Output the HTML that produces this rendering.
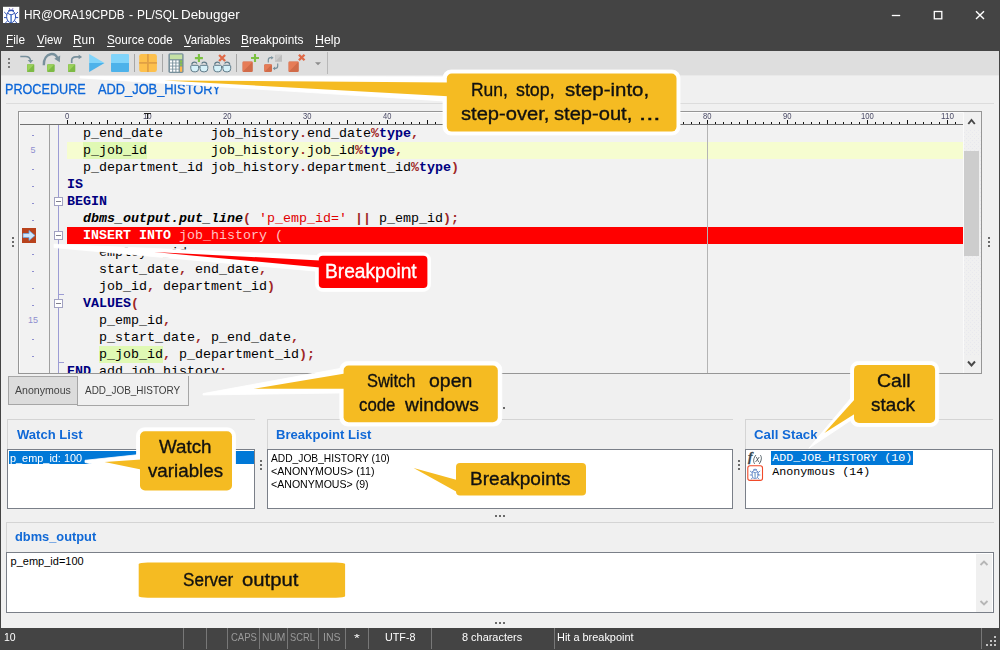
<!DOCTYPE html>
<html><head><meta charset="utf-8"><title>PL/SQL Debugger</title>
<style>
*{box-sizing:border-box;margin:0;padding:0}
html,body{width:1000px;height:650px;overflow:hidden;background:#f0f0f0;font-family:"Liberation Sans",sans-serif}
#win{position:absolute;left:0;top:0;width:1000px;height:650px;background:#f0f0f0;overflow:hidden}
.a{position:absolute}
.tx{position:absolute;white-space:pre;display:block}
.tx u{text-decoration:underline;text-decoration-thickness:1px;text-underline-offset:1.5px}
svg{position:absolute;overflow:visible}

</style></head><body>
<div id="win">
<div class="a" style="left:0px;top:0px;width:1000px;height:51px;background:#444444;"></div><svg style="left:3px;top:7px" width="16" height="16" viewBox="0 0 16 16"><rect width="16.300" height="16.200" y="-.2" fill="#fff"/><g fill="none" stroke="#2f52b4" stroke-width="1" stroke-linecap="round"><ellipse cx="8.100" cy="9.600" rx="4.500" ry="6.100"/><path d="M4.600 6Q8.100 9.800 11.600 6"/><path d="M5.900 3.700Q8.100 2.700 10.300 3.700" stroke-width="1.400"/><path d="M8.100 7.800V15.600" stroke="#4a78c8" stroke-width="1.500" stroke-linecap="butt"/><path d="M6.400 1.500 6.600 2.500M9.800 1.500 9.600 2.500" stroke="#8a7fd0"/><path d="M3.700 7.400 1.500 5.300M12.500 7.400 14.700 5.300M3.400 10.600H1.400M12.800 10.600h2M4.700 13.700 2.400 16M11.500 13.700 13.800 16"/></g></svg><span id="t0" class="tx" style="left:23.58px;top:8.33px;font-size:13.20px;line-height:13.20px;color:#fff;transform:scaleX(0.8950);transform-origin:0 0;">HR@ORA19CPDB</span><span id="t1" class="tx" style="left:128.91px;top:8.33px;font-size:13.20px;line-height:13.20px;color:#fff;transform:scaleX(0.9412);transform-origin:0 0;">-</span><span id="t2" class="tx" style="left:136.57px;top:8.33px;font-size:13.20px;line-height:13.20px;color:#fff;transform:scaleX(0.9027);transform-origin:0 0;">PL/SQL</span><span id="t3" class="tx" style="left:181.45px;top:8.33px;font-size:13.20px;line-height:13.20px;color:#fff;transform:scaleX(1.0144);transform-origin:0 0;">Debugger</span><svg style="left:880px;top:0" width="120" height="30" viewBox="0 0 120 30"><g stroke="#fff" stroke-width="1.300" fill="none"><path d="M11.800 15.500h8.400"/><rect x="54.300" y="11.500" width="7.500" height="7.300"/><path d="M96 11.300l8 7.800M104 11.300l-8 7.800" stroke-width="1.400"/></g></svg><span id="t4" class="tx" style="left:6.44px;top:33.99px;font-size:12.30px;line-height:12.30px;color:#fff;transform:scaleX(0.9629);transform-origin:0 0;"><u>F</u>ile</span><span id="t5" class="tx" style="left:37.15px;top:33.99px;font-size:12.30px;line-height:12.30px;color:#fff;transform:scaleX(0.9374);transform-origin:0 0;"><u>V</u>iew</span><span id="t6" class="tx" style="left:73.44px;top:33.99px;font-size:12.30px;line-height:12.30px;color:#fff;transform:scaleX(0.9628);transform-origin:0 0;"><u>R</u>un</span><span id="t7" class="tx" style="left:106.68px;top:33.99px;font-size:12.30px;line-height:12.30px;color:#fff;transform:scaleX(0.9534);transform-origin:0 0;"><u>S</u>ource code</span><span id="t8" class="tx" style="left:183.95px;top:33.99px;font-size:12.30px;line-height:12.30px;color:#fff;transform:scaleX(0.9216);transform-origin:0 0;"><u>V</u>ariables</span><span id="t9" class="tx" style="left:241.44px;top:33.99px;font-size:12.30px;line-height:12.30px;color:#fff;transform:scaleX(0.9630);transform-origin:0 0;"><u>B</u>reakpoints</span><span id="t10" class="tx" style="left:315.39px;top:33.99px;font-size:12.30px;line-height:12.30px;color:#fff;transform:scaleX(1.0081);transform-origin:0 0;"><u>H</u>elp</span><div class="a" style="left:1px;top:51px;width:998px;height:24px;background:#dedede;"></div><div class="a" style="left:1px;top:75px;width:998px;height:1px;background:#e9e9e9;"></div><svg style="left:0;top:0" width="340" height="80" viewBox="0 0 340 80"><rect x="8" y="58" width="2" height="2" fill="#7a7a7a"/><rect x="8" y="62" width="2" height="2" fill="#7a7a7a"/><rect x="8" y="66" width="2" height="2" fill="#7a7a7a"/><path d="M20.300 56.400H25.500Q30.300 56.400 30.600 61" fill="none" stroke="#78909c" stroke-width="1.500"/><polygon points="27.7,60 33.300,60 30.600,63.300" fill="#78909c"/><rect x="27.0" y="64.2" width="7.3" height="7.7" rx="0.6" fill="#7dba45"/><polygon points="27.3,64.5 34.0,64.5 27.3,71.6" fill="#9bd05a"/><path d="M43.800 65.200C43.500 51.500 57.300 51.500 57.500 59.500" fill="none" stroke="#78909c" stroke-width="2.400"/><polygon points="54.300,58.800 60.200,55.600 59.800,62.300" fill="#78909c"/><rect x="47.0" y="64.2" width="7.7" height="7.7" rx="1.2" fill="#7dba45"/><polygon points="47.3,64.5 54.4,64.5 47.3,71.6" fill="#9bd05a"/><path d="M71.700 63V60.500Q71.700 57 76 56.900H79.500" fill="none" stroke="#78909c" stroke-width="1.700"/><polygon points="78.600,54.400 82.100,56.900 78.600,59.300" fill="#78909c"/><rect x="68.0" y="64.2" width="7.3" height="7.7" rx="0.6" fill="#7dba45"/><polygon points="68.3,64.5 75.0,64.5 68.3,71.6" fill="#9bd05a"/><polygon points="89.200,54.100 104.500,63 89.200,63" fill="#81d4fa"/><polygon points="89.200,63 104.500,63 89.200,72.100" fill="#4db2ea"/><path d="M111 55.100a1 1 0 0 1 1-1h16a1 1 0 0 1 1 1V63H111z" fill="#81d4fa"/><path d="M111 63h18v8a1 1 0 0 1-1 1h-16a1 1 0 0 1-1-1z" fill="#4db2ea"/><rect x="134" y="54" width="1" height="18" fill="#a6a6a6"/><rect x="162" y="54" width="1" height="18" fill="#a6a6a6"/><rect x="236" y="54" width="1" height="18" fill="#a6a6a6"/><rect x="139.200" y="54.100" width="17.700" height="17.900" rx="2.200" fill="#fdc04c"/><rect x="147" y="54.100" width="1.800" height="17.900" fill="#e0a045"/><rect x="139.200" y="62" width="17.700" height="1.800" fill="#e0a045"/><rect x="168.400" y="53.200" width="15.200" height="19.700" rx="1.600" fill="#78909c"/><rect x="169.900" y="54.500" width="12.300" height="4.700" fill="#c5e1a5"/><rect x="170.0" y="60.4" width="2.200" height="2.200" fill="#fff"/><rect x="173.2" y="60.4" width="2.200" height="2.200" fill="#fff"/><rect x="176.4" y="60.4" width="2.200" height="2.200" fill="#fff"/><rect x="170.0" y="63.4" width="2.200" height="2.200" fill="#fff"/><rect x="173.2" y="63.4" width="2.200" height="2.200" fill="#fff"/><rect x="176.4" y="63.4" width="2.200" height="2.200" fill="#fff"/><rect x="170.0" y="66.5" width="2.200" height="2.200" fill="#fff"/><rect x="173.2" y="66.5" width="2.200" height="2.200" fill="#fff"/><rect x="176.4" y="66.5" width="2.200" height="2.200" fill="#fff"/><rect x="170.0" y="69.5" width="2.200" height="2.200" fill="#fff"/><rect x="173.2" y="69.5" width="2.200" height="2.200" fill="#fff"/><rect x="176.4" y="69.5" width="2.200" height="2.200" fill="#fff"/><rect x="179.900" y="60.400" width="2.300" height="2.200" fill="#8bc34a"/><rect x="179.900" y="63.450" width="2.300" height="2.200" fill="#8bc34a"/><rect x="179.900" y="66.500" width="2.300" height="5.250" fill="#ffb74d"/><g fill="#d6f1f9" stroke="#5f7a88" stroke-width="1"><path d="M191.4 65.300h6.600l.6 .6v2.700q0 3.200-3 3.200h-1.800q-3 0-3-3.200v-2.700z"/><path d="M200.6 65.300h6.600l.6 .6v2.700q0 3.200-3 3.200h-1.800q-3 0-3-3.200v-2.700z"/><path d="M198.6 67.300q.8-.9 1.600 0" fill="none"/><path d="M191.7 64.600Q192.0 62.100 194.6 62.100Q196.5 62.100 196.8 63.700" fill="none" stroke-width="1.200"/><path d="M206.9 64.600Q206.6 62.100 204.0 62.100Q202.1 62.100 201.8 63.700" fill="none" stroke-width="1.200"/></g><g fill="#d6f1f9" stroke="#5f7a88" stroke-width="1"><path d="M214.3 65.300h6.600l.6 .6v2.700q0 3.200-3 3.200h-1.800q-3 0-3-3.200v-2.700z"/><path d="M223.5 65.300h6.600l.6 .6v2.700q0 3.200-3 3.200h-1.800q-3 0-3-3.200v-2.700z"/><path d="M221.5 67.300q.8-.9 1.600 0" fill="none"/><path d="M214.6 64.600Q214.9 62.100 217.5 62.100Q219.4 62.100 219.7 63.700" fill="none" stroke-width="1.200"/><path d="M229.8 64.600Q229.5 62.100 226.9 62.100Q225.0 62.100 224.7 63.700" fill="none" stroke-width="1.200"/></g><path d="M194.9 58.1h8.0M198.9 54.1v8.0" stroke="#7cc142" stroke-width="2.100" fill="none"/><path d="M219.1 55.0l6.0 6.0M225.1 55.0l-6.0 6.0" stroke="#e06a48" stroke-width="2.300" fill="none"/><rect x="242.5" y="61.5" width="10.3" height="10.5" rx="1.2" fill="#d16b49"/><polygon points="242.8,61.8 252.5,61.8 242.8,71.7" fill="#e67c57"/><path d="M251.0 58.0h8.0M255.0 54.0v8.0" stroke="#7cc142" stroke-width="2.100" fill="none"/><rect x="264.2" y="64.2" width="7.8" height="7.8" rx="1.2" fill="#d16b49"/><polygon points="264.5,64.5 271.7,64.5 264.5,71.7" fill="#e67c57"/><rect x="275.0" y="54.8" width="7.0" height="7.0" rx="0.5" fill="#bdbdbd"/><polygon points="275.3,55.1 281.7,55.1 275.3,61.5" fill="#cdcdcd"/><path d="M268.300 62.500V60Q268.300 57.700 270.500 57.700H271.500" fill="none" stroke="#78909c" stroke-width="1.200"/><polygon points="271.200,55.900 273.600,57.700 271.200,59.500" fill="#78909c"/><path d="M277.700 63.500V66Q277.700 68.400 275.500 68.400H274.800" fill="none" stroke="#78909c" stroke-width="1.200"/><polygon points="275.100,66.600 272.700,68.400 275.100,70.200" fill="#78909c"/><rect x="288.5" y="61.5" width="10.3" height="10.5" rx="1.2" fill="#d16b49"/><polygon points="288.8,61.8 298.5,61.8 288.8,71.7" fill="#e67c57"/><path d="M298.9 54.7l5.6 5.6M304.5 54.7l-5.6 5.6" stroke="#e06a48" stroke-width="2.300" fill="none"/><polygon points="315,62.300 321,62.300 318,65.200" fill="#8c8c8c"/><rect x="327" y="52" width="1" height="22" fill="#b8b8b8"/></svg><span id="t11" class="tx" style="left:5.31px;top:81.85px;font-size:14.00px;line-height:14.00px;color:#0c66d8;transform:scaleX(0.9023);transform-origin:0 0;-webkit-text-stroke:0.3px #0c66d8;">PROCEDURE</span><span id="t12" class="tx" style="left:98.30px;top:81.85px;font-size:14.00px;line-height:14.00px;color:#0c66d8;transform:scaleX(0.9162);transform-origin:0 0;-webkit-text-stroke:0.3px #0c66d8;">ADD_JOB_HISTORY</span><div class="a" style="left:6px;top:103px;width:988px;height:1px;background:#dcdcdc;"></div><div class="a" style="left:18px;top:111px;width:964px;height:263px;background:#f2f2f2;border:1px solid #969696;"></div><div class="a" style="left:67px;top:142px;width:896px;height:17px;background:#f6fdd0;"></div><div class="a" style="left:83px;top:142px;width:64px;height:17px;background:#e0f9b4;"></div><div class="a" style="left:67px;top:227px;width:896px;height:17px;background:#ff0000;"></div><div class="a" style="left:99px;top:346px;width:64px;height:17px;background:#e0f9b4;"></div><div class="a" style="left:707px;top:125px;width:1px;height:248px;background:#b4b4b4;"></div><div class="a" style="left:49px;top:125px;width:1px;height:248px;background:#a0a0a0;"></div><div class="a" style="left:58px;top:125px;width:1px;height:248px;background:#9c9cd4;"></div><div class="a" style="left:58px;top:294px;width:6px;height:1px;background:#9c9cd4;"></div><div class="a" style="left:58px;top:362px;width:6px;height:1px;background:#9c9cd4;"></div><div class="a" style="left:0;top:0;width:1000px;height:373px;overflow:hidden"><span id="t13" class="tx" style="left:83.00px;top:127.28px;font-size:13.33px;line-height:13.33px;color:#000;font-family:'Liberation Mono',monospace;">p_end_date</span><span id="t14" class="tx" style="left:211.00px;top:127.28px;font-size:13.33px;line-height:13.33px;color:#000;font-family:'Liberation Mono',monospace;">job_history</span><span id="t15" class="tx" style="left:299.00px;top:127.28px;font-size:13.33px;line-height:13.33px;color:#9e2626;font-weight:bold;font-family:'Liberation Mono',monospace;">.</span><span id="t16" class="tx" style="left:307.00px;top:127.28px;font-size:13.33px;line-height:13.33px;color:#000;font-family:'Liberation Mono',monospace;">end_date</span><span id="t17" class="tx" style="left:371.00px;top:127.28px;font-size:13.33px;line-height:13.33px;color:#9e2626;font-weight:bold;font-family:'Liberation Mono',monospace;">%</span><span id="t18" class="tx" style="left:379.00px;top:127.28px;font-size:13.33px;line-height:13.33px;color:#000080;font-weight:bold;font-family:'Liberation Mono',monospace;">type</span><span id="t19" class="tx" style="left:411.00px;top:127.28px;font-size:13.33px;line-height:13.33px;color:#9e2626;font-weight:bold;font-family:'Liberation Mono',monospace;">,</span><span id="t20" class="tx" style="left:83.00px;top:144.28px;font-size:13.33px;line-height:13.33px;color:#000;font-family:'Liberation Mono',monospace;">p_job_id</span><span id="t21" class="tx" style="left:211.00px;top:144.28px;font-size:13.33px;line-height:13.33px;color:#000;font-family:'Liberation Mono',monospace;">job_history</span><span id="t22" class="tx" style="left:299.00px;top:144.28px;font-size:13.33px;line-height:13.33px;color:#9e2626;font-weight:bold;font-family:'Liberation Mono',monospace;">.</span><span id="t23" class="tx" style="left:307.00px;top:144.28px;font-size:13.33px;line-height:13.33px;color:#000;font-family:'Liberation Mono',monospace;">job_id</span><span id="t24" class="tx" style="left:355.00px;top:144.28px;font-size:13.33px;line-height:13.33px;color:#9e2626;font-weight:bold;font-family:'Liberation Mono',monospace;">%</span><span id="t25" class="tx" style="left:363.00px;top:144.28px;font-size:13.33px;line-height:13.33px;color:#000080;font-weight:bold;font-family:'Liberation Mono',monospace;">type</span><span id="t26" class="tx" style="left:395.00px;top:144.28px;font-size:13.33px;line-height:13.33px;color:#9e2626;font-weight:bold;font-family:'Liberation Mono',monospace;">,</span><span id="t27" class="tx" style="left:83.00px;top:161.28px;font-size:13.33px;line-height:13.33px;color:#000;font-family:'Liberation Mono',monospace;">p_department_id</span><span id="t28" class="tx" style="left:211.00px;top:161.28px;font-size:13.33px;line-height:13.33px;color:#000;font-family:'Liberation Mono',monospace;">job_history</span><span id="t29" class="tx" style="left:299.00px;top:161.28px;font-size:13.33px;line-height:13.33px;color:#9e2626;font-weight:bold;font-family:'Liberation Mono',monospace;">.</span><span id="t30" class="tx" style="left:307.00px;top:161.28px;font-size:13.33px;line-height:13.33px;color:#000;font-family:'Liberation Mono',monospace;">department_id</span><span id="t31" class="tx" style="left:411.00px;top:161.28px;font-size:13.33px;line-height:13.33px;color:#9e2626;font-weight:bold;font-family:'Liberation Mono',monospace;">%</span><span id="t32" class="tx" style="left:419.00px;top:161.28px;font-size:13.33px;line-height:13.33px;color:#000080;font-weight:bold;font-family:'Liberation Mono',monospace;">type</span><span id="t33" class="tx" style="left:451.00px;top:161.28px;font-size:13.33px;line-height:13.33px;color:#9e2626;font-weight:bold;font-family:'Liberation Mono',monospace;">)</span><span id="t34" class="tx" style="left:67.00px;top:178.28px;font-size:13.33px;line-height:13.33px;color:#000080;font-weight:bold;font-family:'Liberation Mono',monospace;">IS</span><span id="t35" class="tx" style="left:67.00px;top:195.28px;font-size:13.33px;line-height:13.33px;color:#000080;font-weight:bold;font-family:'Liberation Mono',monospace;">BEGIN</span><span id="t36" class="tx" style="left:83.00px;top:212.28px;font-size:13.33px;line-height:13.33px;color:#000;font-weight:bold;font-style:italic;font-family:'Liberation Mono',monospace;">dbms_output.put_line</span><span id="t37" class="tx" style="left:243.00px;top:212.28px;font-size:13.33px;line-height:13.33px;color:#9e2626;font-weight:bold;font-family:'Liberation Mono',monospace;">(</span><span id="t38" class="tx" style="left:259.00px;top:212.28px;font-size:13.33px;line-height:13.33px;color:#e00000;font-family:'Liberation Mono',monospace;">&#x27;p_emp_id=&#x27;</span><span id="t39" class="tx" style="left:355.00px;top:212.28px;font-size:13.33px;line-height:13.33px;color:#9e2626;font-weight:bold;font-family:'Liberation Mono',monospace;">||</span><span id="t40" class="tx" style="left:379.00px;top:212.28px;font-size:13.33px;line-height:13.33px;color:#000;font-family:'Liberation Mono',monospace;">p_emp_id</span><span id="t41" class="tx" style="left:443.00px;top:212.28px;font-size:13.33px;line-height:13.33px;color:#9e2626;font-weight:bold;font-family:'Liberation Mono',monospace;">);</span><span id="t42" class="tx" style="left:83.00px;top:229.28px;font-size:13.33px;line-height:13.33px;color:#fff;font-weight:bold;font-family:'Liberation Mono',monospace;">INSERT INTO</span><span id="t43" class="tx" style="left:179.00px;top:229.28px;font-size:13.33px;line-height:13.33px;color:#ffc0c0;font-family:'Liberation Mono',monospace;">job_history</span><span id="t44" class="tx" style="left:275.00px;top:229.28px;font-size:13.33px;line-height:13.33px;color:#ffc0c0;font-family:'Liberation Mono',monospace;">(</span><span id="t45" class="tx" style="left:99.00px;top:246.28px;font-size:13.33px;line-height:13.33px;color:#000;font-family:'Liberation Mono',monospace;">employee_id</span><span id="t46" class="tx" style="left:187.00px;top:246.28px;font-size:13.33px;line-height:13.33px;color:#9e2626;font-weight:bold;font-family:'Liberation Mono',monospace;">,</span><span id="t47" class="tx" style="left:99.00px;top:263.28px;font-size:13.33px;line-height:13.33px;color:#000;font-family:'Liberation Mono',monospace;">start_date</span><span id="t48" class="tx" style="left:179.00px;top:263.28px;font-size:13.33px;line-height:13.33px;color:#9e2626;font-weight:bold;font-family:'Liberation Mono',monospace;">,</span><span id="t49" class="tx" style="left:195.00px;top:263.28px;font-size:13.33px;line-height:13.33px;color:#000;font-family:'Liberation Mono',monospace;">end_date</span><span id="t50" class="tx" style="left:259.00px;top:263.28px;font-size:13.33px;line-height:13.33px;color:#9e2626;font-weight:bold;font-family:'Liberation Mono',monospace;">,</span><span id="t51" class="tx" style="left:99.00px;top:280.28px;font-size:13.33px;line-height:13.33px;color:#000;font-family:'Liberation Mono',monospace;">job_id</span><span id="t52" class="tx" style="left:147.00px;top:280.28px;font-size:13.33px;line-height:13.33px;color:#9e2626;font-weight:bold;font-family:'Liberation Mono',monospace;">,</span><span id="t53" class="tx" style="left:163.00px;top:280.28px;font-size:13.33px;line-height:13.33px;color:#000;font-family:'Liberation Mono',monospace;">department_id</span><span id="t54" class="tx" style="left:267.00px;top:280.28px;font-size:13.33px;line-height:13.33px;color:#9e2626;font-weight:bold;font-family:'Liberation Mono',monospace;">)</span><span id="t55" class="tx" style="left:83.00px;top:297.28px;font-size:13.33px;line-height:13.33px;color:#000080;font-weight:bold;font-family:'Liberation Mono',monospace;">VALUES</span><span id="t56" class="tx" style="left:131.00px;top:297.28px;font-size:13.33px;line-height:13.33px;color:#9e2626;font-weight:bold;font-family:'Liberation Mono',monospace;">(</span><span id="t57" class="tx" style="left:99.00px;top:314.28px;font-size:13.33px;line-height:13.33px;color:#000;font-family:'Liberation Mono',monospace;">p_emp_id</span><span id="t58" class="tx" style="left:163.00px;top:314.28px;font-size:13.33px;line-height:13.33px;color:#9e2626;font-weight:bold;font-family:'Liberation Mono',monospace;">,</span><span id="t59" class="tx" style="left:99.00px;top:331.28px;font-size:13.33px;line-height:13.33px;color:#000;font-family:'Liberation Mono',monospace;">p_start_date</span><span id="t60" class="tx" style="left:195.00px;top:331.28px;font-size:13.33px;line-height:13.33px;color:#9e2626;font-weight:bold;font-family:'Liberation Mono',monospace;">,</span><span id="t61" class="tx" style="left:211.00px;top:331.28px;font-size:13.33px;line-height:13.33px;color:#000;font-family:'Liberation Mono',monospace;">p_end_date</span><span id="t62" class="tx" style="left:291.00px;top:331.28px;font-size:13.33px;line-height:13.33px;color:#9e2626;font-weight:bold;font-family:'Liberation Mono',monospace;">,</span><span id="t63" class="tx" style="left:99.00px;top:348.28px;font-size:13.33px;line-height:13.33px;color:#000;font-family:'Liberation Mono',monospace;">p_job_id</span><span id="t64" class="tx" style="left:163.00px;top:348.28px;font-size:13.33px;line-height:13.33px;color:#9e2626;font-weight:bold;font-family:'Liberation Mono',monospace;">,</span><span id="t65" class="tx" style="left:179.00px;top:348.28px;font-size:13.33px;line-height:13.33px;color:#000;font-family:'Liberation Mono',monospace;">p_department_id</span><span id="t66" class="tx" style="left:299.00px;top:348.28px;font-size:13.33px;line-height:13.33px;color:#9e2626;font-weight:bold;font-family:'Liberation Mono',monospace;">);</span><span id="t67" class="tx" style="left:67.00px;top:365.28px;font-size:13.33px;line-height:13.33px;color:#000080;font-weight:bold;font-family:'Liberation Mono',monospace;">END</span><span id="t68" class="tx" style="left:99.00px;top:365.28px;font-size:13.33px;line-height:13.33px;color:#000;font-family:'Liberation Mono',monospace;">add_job_history</span><span id="t69" class="tx" style="left:219.00px;top:365.28px;font-size:13.33px;line-height:13.33px;color:#9e2626;font-weight:bold;font-family:'Liberation Mono',monospace;">;</span></div><div class="a" style="left:32px;top:135px;width:2px;height:1px;background:#8f8fcf;"></div><div class="a" style="left:32px;top:169px;width:2px;height:1px;background:#8f8fcf;"></div><div class="a" style="left:32px;top:186px;width:2px;height:1px;background:#8f8fcf;"></div><div class="a" style="left:32px;top:203px;width:2px;height:1px;background:#8f8fcf;"></div><div class="a" style="left:32px;top:220px;width:2px;height:1px;background:#8f8fcf;"></div><div class="a" style="left:32px;top:254px;width:2px;height:1px;background:#8f8fcf;"></div><div class="a" style="left:32px;top:271px;width:2px;height:1px;background:#8f8fcf;"></div><div class="a" style="left:32px;top:288px;width:2px;height:1px;background:#8f8fcf;"></div><div class="a" style="left:32px;top:305px;width:2px;height:1px;background:#8f8fcf;"></div><div class="a" style="left:32px;top:339px;width:2px;height:1px;background:#8f8fcf;"></div><div class="a" style="left:32px;top:356px;width:2px;height:1px;background:#8f8fcf;"></div><span id="t70" class="tx" style="left:30.50px;top:146.38px;font-size:9.00px;line-height:9.00px;color:#8f8fcf;">5</span><span id="t71" class="tx" style="left:28.00px;top:316.38px;font-size:9.00px;line-height:9.00px;color:#8f8fcf;">15</span><div class="a" style="left:54px;top:197px;width:9px;height:9px;background:#fff;border:1px solid #a2a2c2"></div><div class="a" style="left:56px;top:201px;width:5px;height:1px;background:#80808e;"></div><div class="a" style="left:54px;top:231px;width:9px;height:9px;background:#fff;border:1px solid #a2a2c2"></div><div class="a" style="left:56px;top:235px;width:5px;height:1px;background:#80808e;"></div><div class="a" style="left:54px;top:299px;width:9px;height:9px;background:#fff;border:1px solid #a2a2c2"></div><div class="a" style="left:56px;top:303px;width:5px;height:1px;background:#80808e;"></div><div class="a" style="left:19px;top:112px;width:945px;height:13px;background:#f2f2f2;"></div><div class="a" style="left:19px;top:112px;width:962px;height:1px;background:#fcfcfc;"></div><div class="a" style="left:19px;top:112px;width:1px;height:260px;background:#fcfcfc;"></div><div class="a" style="left:20px;top:124px;width:944px;height:1px;background:#707070;"></div><svg style="left:0;top:0" width="1000" height="130" fill="#101010"><rect x="67" y="120" width="1" height="4"/><rect x="75" y="122" width="1" height="2"/><rect x="83" y="122" width="1" height="2"/><rect x="91" y="122" width="1" height="2"/><rect x="99" y="122" width="1" height="2"/><rect x="107" y="120" width="1" height="4"/><rect x="115" y="122" width="1" height="2"/><rect x="123" y="122" width="1" height="2"/><rect x="131" y="122" width="1" height="2"/><rect x="139" y="122" width="1" height="2"/><rect x="147" y="120" width="1" height="4"/><rect x="155" y="122" width="1" height="2"/><rect x="163" y="122" width="1" height="2"/><rect x="171" y="122" width="1" height="2"/><rect x="179" y="122" width="1" height="2"/><rect x="187" y="120" width="1" height="4"/><rect x="195" y="122" width="1" height="2"/><rect x="203" y="122" width="1" height="2"/><rect x="211" y="122" width="1" height="2"/><rect x="219" y="122" width="1" height="2"/><rect x="227" y="120" width="1" height="4"/><rect x="235" y="122" width="1" height="2"/><rect x="243" y="122" width="1" height="2"/><rect x="251" y="122" width="1" height="2"/><rect x="259" y="122" width="1" height="2"/><rect x="267" y="120" width="1" height="4"/><rect x="275" y="122" width="1" height="2"/><rect x="283" y="122" width="1" height="2"/><rect x="291" y="122" width="1" height="2"/><rect x="299" y="122" width="1" height="2"/><rect x="307" y="120" width="1" height="4"/><rect x="315" y="122" width="1" height="2"/><rect x="323" y="122" width="1" height="2"/><rect x="331" y="122" width="1" height="2"/><rect x="339" y="122" width="1" height="2"/><rect x="347" y="120" width="1" height="4"/><rect x="355" y="122" width="1" height="2"/><rect x="363" y="122" width="1" height="2"/><rect x="371" y="122" width="1" height="2"/><rect x="379" y="122" width="1" height="2"/><rect x="387" y="120" width="1" height="4"/><rect x="395" y="122" width="1" height="2"/><rect x="403" y="122" width="1" height="2"/><rect x="411" y="122" width="1" height="2"/><rect x="419" y="122" width="1" height="2"/><rect x="427" y="120" width="1" height="4"/><rect x="435" y="122" width="1" height="2"/><rect x="443" y="122" width="1" height="2"/><rect x="451" y="122" width="1" height="2"/><rect x="459" y="122" width="1" height="2"/><rect x="467" y="120" width="1" height="4"/><rect x="475" y="122" width="1" height="2"/><rect x="483" y="122" width="1" height="2"/><rect x="491" y="122" width="1" height="2"/><rect x="499" y="122" width="1" height="2"/><rect x="507" y="120" width="1" height="4"/><rect x="515" y="122" width="1" height="2"/><rect x="523" y="122" width="1" height="2"/><rect x="531" y="122" width="1" height="2"/><rect x="539" y="122" width="1" height="2"/><rect x="547" y="120" width="1" height="4"/><rect x="555" y="122" width="1" height="2"/><rect x="563" y="122" width="1" height="2"/><rect x="571" y="122" width="1" height="2"/><rect x="579" y="122" width="1" height="2"/><rect x="587" y="120" width="1" height="4"/><rect x="595" y="122" width="1" height="2"/><rect x="603" y="122" width="1" height="2"/><rect x="611" y="122" width="1" height="2"/><rect x="619" y="122" width="1" height="2"/><rect x="627" y="120" width="1" height="4"/><rect x="635" y="122" width="1" height="2"/><rect x="643" y="122" width="1" height="2"/><rect x="651" y="122" width="1" height="2"/><rect x="659" y="122" width="1" height="2"/><rect x="667" y="120" width="1" height="4"/><rect x="675" y="122" width="1" height="2"/><rect x="683" y="122" width="1" height="2"/><rect x="691" y="122" width="1" height="2"/><rect x="699" y="122" width="1" height="2"/><rect x="707" y="120" width="1" height="4"/><rect x="715" y="122" width="1" height="2"/><rect x="723" y="122" width="1" height="2"/><rect x="731" y="122" width="1" height="2"/><rect x="739" y="122" width="1" height="2"/><rect x="747" y="120" width="1" height="4"/><rect x="755" y="122" width="1" height="2"/><rect x="763" y="122" width="1" height="2"/><rect x="771" y="122" width="1" height="2"/><rect x="779" y="122" width="1" height="2"/><rect x="787" y="120" width="1" height="4"/><rect x="795" y="122" width="1" height="2"/><rect x="803" y="122" width="1" height="2"/><rect x="811" y="122" width="1" height="2"/><rect x="819" y="122" width="1" height="2"/><rect x="827" y="120" width="1" height="4"/><rect x="835" y="122" width="1" height="2"/><rect x="843" y="122" width="1" height="2"/><rect x="851" y="122" width="1" height="2"/><rect x="859" y="122" width="1" height="2"/><rect x="867" y="120" width="1" height="4"/><rect x="875" y="122" width="1" height="2"/><rect x="883" y="122" width="1" height="2"/><rect x="891" y="122" width="1" height="2"/><rect x="899" y="122" width="1" height="2"/><rect x="907" y="120" width="1" height="4"/><rect x="915" y="122" width="1" height="2"/><rect x="923" y="122" width="1" height="2"/><rect x="931" y="122" width="1" height="2"/><rect x="939" y="122" width="1" height="2"/><rect x="947" y="120" width="1" height="4"/><rect x="955" y="122" width="1" height="2"/></svg><span id="t72" class="tx" style="left:65.16px;top:112.15px;font-size:8.80px;line-height:8.80px;color:#4a4a66;transform:scaleX(0.8721);transform-origin:0 0;">0</span><span id="t73" class="tx" style="left:142.77px;top:112.15px;font-size:8.80px;line-height:8.80px;color:#4a4a66;transform:scaleX(0.8932);transform-origin:0 0;">10</span><span id="t74" class="tx" style="left:223.00px;top:112.15px;font-size:8.80px;line-height:8.80px;color:#4a4a66;transform:scaleX(0.8687);transform-origin:0 0;">20</span><span id="t75" class="tx" style="left:303.09px;top:112.15px;font-size:8.80px;line-height:8.80px;color:#4a4a66;transform:scaleX(0.8592);transform-origin:0 0;">30</span><span id="t76" class="tx" style="left:383.18px;top:112.15px;font-size:8.80px;line-height:8.80px;color:#4a4a66;transform:scaleX(0.8500);transform-origin:0 0;">40</span><span id="t77" class="tx" style="left:463.05px;top:112.15px;font-size:8.80px;line-height:8.80px;color:#4a4a66;transform:scaleX(0.8639);transform-origin:0 0;">50</span><span id="t78" class="tx" style="left:543.00px;top:112.15px;font-size:8.80px;line-height:8.80px;color:#4a4a66;transform:scaleX(0.8687);transform-origin:0 0;">60</span><span id="t79" class="tx" style="left:622.96px;top:112.15px;font-size:8.80px;line-height:8.80px;color:#4a4a66;transform:scaleX(0.8735);transform-origin:0 0;">70</span><span id="t80" class="tx" style="left:703.05px;top:112.15px;font-size:8.80px;line-height:8.80px;color:#4a4a66;transform:scaleX(0.8639);transform-origin:0 0;">80</span><span id="t81" class="tx" style="left:783.00px;top:112.15px;font-size:8.80px;line-height:8.80px;color:#4a4a66;transform:scaleX(0.8687);transform-origin:0 0;">90</span><span id="t82" class="tx" style="left:860.70px;top:112.15px;font-size:8.80px;line-height:8.80px;color:#4a4a66;transform:scaleX(0.8771);transform-origin:0 0;">100</span><span id="t83" class="tx" style="left:940.68px;top:112.15px;font-size:8.80px;line-height:8.80px;color:#4a4a66;transform:scaleX(0.9209);transform-origin:0 0;">110</span><div class="a" style="left:147px;top:113px;width:1px;height:6px;background:#202020;"></div><div class="a" style="left:144px;top:113px;width:7px;height:1px;background:#202020;"></div><div class="a" style="left:963px;top:112px;width:1px;height:261px;background:#fafafa;"></div><svg style="left:964px;top:112px" width="17" height="261"><defs><pattern id="dp" width="4" height="4" patternUnits="userSpaceOnUse"><rect width="4" height="4" fill="#f0f0f0"/><rect x="0" y="0" width="1" height="1" fill="#e8e8ee"/><rect x="2" y="2" width="1" height="1" fill="#e8e8ee"/></pattern></defs><rect width="17" height="261" fill="url(#dp)"/><rect width="17" height="18" fill="#f0f0f0"/><rect y="243" width="17" height="18" fill="#f0f0f0"/><rect x="0" y="39" width="15" height="105" fill="#cdcdcd"/><g fill="none" stroke="#484848" stroke-width="1.900"><path d="M4.300 12 7.500 8l3.300 4"/><path d="M4 249.500l3.500 4 3.500-4"/></g></svg><svg style="left:22px;top:228px" width="15" height="15" viewBox="0 0 15 15"><rect width="14" height="15" fill="#b8421c"/><path d="M1 5.500h6V2.500l6 5-6 5V9.500H1z" fill="#cfe6fb" stroke="#6aa5e0" stroke-width=".8"/></svg><div class="a" style="left:12px;top:237px;width:2px;height:2px;background:#6a6a6a;"></div><div class="a" style="left:12px;top:241px;width:2px;height:2px;background:#6a6a6a;"></div><div class="a" style="left:12px;top:245px;width:2px;height:2px;background:#6a6a6a;"></div><div class="a" style="left:988px;top:237px;width:2px;height:2px;background:#6a6a6a;"></div><div class="a" style="left:988px;top:241px;width:2px;height:2px;background:#6a6a6a;"></div><div class="a" style="left:988px;top:245px;width:2px;height:2px;background:#6a6a6a;"></div><div class="a" style="left:8px;top:376px;width:70px;height:29px;background:#dcdcdc;border:1px solid #a6a6a6;"></div><div class="a" style="left:77px;top:376px;width:112px;height:30px;background:#f0f0f0;border:1px solid #a6a6a6;border-top:none;"></div><span id="t84" class="tx" style="left:14.80px;top:384.57px;font-size:11.50px;line-height:11.50px;color:#444;transform:scaleX(0.9200);transform-origin:0 0;">Anonymous</span><span id="t85" class="tx" style="left:85.00px;top:384.97px;font-size:11.50px;line-height:11.50px;color:#3c3c3c;transform:scaleX(0.8643);transform-origin:0 0;">ADD_JOB_HISTORY</span><div class="a" style="left:7px;top:419px;width:248px;height:1px;background:#d4d4d4;"></div><div class="a" style="left:7px;top:419px;width:1px;height:30px;background:#d4d4d4;"></div><span id="t86" class="tx" style="left:16.50px;top:427.86px;font-size:13.40px;line-height:13.40px;color:#1169d6;font-weight:bold;transform:scaleX(0.9749);transform-origin:0 0;">Watch List</span><div class="a" style="left:7px;top:449px;width:248px;height:60px;background:#fff;border:1px solid #7a7f88;"></div><div class="a" style="left:267px;top:419px;width:466px;height:1px;background:#d4d4d4;"></div><div class="a" style="left:267px;top:419px;width:1px;height:30px;background:#d4d4d4;"></div><span id="t87" class="tx" style="left:275.98px;top:427.86px;font-size:13.40px;line-height:13.40px;color:#1169d6;font-weight:bold;transform:scaleX(0.9779);transform-origin:0 0;">Breakpoint List</span><div class="a" style="left:267px;top:449px;width:466px;height:60px;background:#fff;border:1px solid #7a7f88;"></div><div class="a" style="left:745px;top:419px;width:248px;height:1px;background:#d4d4d4;"></div><div class="a" style="left:745px;top:419px;width:1px;height:30px;background:#d4d4d4;"></div><span id="t88" class="tx" style="left:753.78px;top:427.86px;font-size:13.40px;line-height:13.40px;color:#1169d6;font-weight:bold;transform:scaleX(0.9934);transform-origin:0 0;">Call Stack</span><div class="a" style="left:745px;top:449px;width:248px;height:60px;background:#fff;border:1px solid #7a7f88;"></div><div class="a" style="left:9px;top:451px;width:245px;height:13px;background:#0078d7;"></div><span id="t89" class="tx" style="left:9.81px;top:452.69px;font-size:11.00px;line-height:11.00px;color:#fff;transform:scaleX(0.9908);transform-origin:0 0;">p_emp_id: 100</span><span id="t90" class="tx" style="left:271.00px;top:453.39px;font-size:11.00px;line-height:11.00px;color:#000;transform:scaleX(0.9293);transform-origin:0 0;">ADD_JOB_HISTORY (10)</span><span id="t91" class="tx" style="left:270.52px;top:466.39px;font-size:11.00px;line-height:11.00px;color:#000;transform:scaleX(0.9687);transform-origin:0 0;">&lt;ANONYMOUS&gt; (11)</span><span id="t92" class="tx" style="left:270.52px;top:479.39px;font-size:11.00px;line-height:11.00px;color:#000;transform:scaleX(0.9621);transform-origin:0 0;">&lt;ANONYMOUS&gt; (9)</span><div class="a" style="left:771px;top:451px;width:142px;height:14px;background:#0078d7;"></div><span id="t93" class="tx" style="left:772.30px;top:452.95px;font-size:11.67px;line-height:11.67px;color:#fff;font-family:'Liberation Mono',monospace;">ADD_JOB_HISTORY (10)</span><span id="t94" class="tx" style="left:772.30px;top:466.95px;font-size:11.67px;line-height:11.67px;color:#000;font-family:'Liberation Mono',monospace;">Anonymous (14)</span><svg style="left:747px;top:465px" width="16" height="16" viewBox="0 0 16 16"><rect x=".8" y=".7" width="14.700" height="14.700" rx="2.200" fill="#fff" stroke="#f04a2a" stroke-width="1.100"/><g fill="none" stroke="#5078c0" stroke-width=".8" stroke-linecap="round"><ellipse cx="8.100" cy="9.300" rx="3" ry="4.300"/><path d="M5.600 6.800Q8.100 9 10.600 6.800"/><path d="M6.500 4.600Q8.100 3.500 9.700 4.600"/><path d="M8.100 8V13.500" stroke="#9ab8d8" stroke-width="1.600" stroke-linecap="butt"/><path d="M5.200 7.700 3.300 6.200M11 7.700 12.900 6.200M5 10H3.200M11.200 10H13M5.800 12.600 4.200 14M10.400 12.600 12 14"/></g></svg><span id="t95" class="tx" style="left:748.00px;top:450.29px;font-size:13.50px;line-height:13.50px;color:#37474f;font-weight:bold;font-style:italic;font-family:'Liberation Serif',serif;-webkit-text-stroke:0.3px #37474f;">f</span><span id="t96" class="tx" style="left:753.43px;top:454.92px;font-size:8.60px;line-height:8.60px;color:#37474f;font-style:italic;transform:scaleX(0.9166);transform-origin:0 0;">(x)</span><div class="a" style="left:260px;top:460px;width:2px;height:2px;background:#6a6a6a;"></div><div class="a" style="left:260px;top:464px;width:2px;height:2px;background:#6a6a6a;"></div><div class="a" style="left:260px;top:468px;width:2px;height:2px;background:#6a6a6a;"></div><div class="a" style="left:738px;top:460px;width:2px;height:2px;background:#6a6a6a;"></div><div class="a" style="left:738px;top:464px;width:2px;height:2px;background:#6a6a6a;"></div><div class="a" style="left:738px;top:468px;width:2px;height:2px;background:#6a6a6a;"></div><div class="a" style="left:495px;top:515px;width:2px;height:2px;background:#6a6a6a;"></div><div class="a" style="left:499px;top:515px;width:2px;height:2px;background:#6a6a6a;"></div><div class="a" style="left:503px;top:515px;width:2px;height:2px;background:#6a6a6a;"></div><div class="a" style="left:495px;top:622px;width:2px;height:2px;background:#6a6a6a;"></div><div class="a" style="left:499px;top:622px;width:2px;height:2px;background:#6a6a6a;"></div><div class="a" style="left:503px;top:622px;width:2px;height:2px;background:#6a6a6a;"></div><div class="a" style="left:6px;top:522px;width:988px;height:1px;background:#d4d4d4;"></div><div class="a" style="left:6px;top:522px;width:1px;height:30px;background:#d4d4d4;"></div><span id="t97" class="tx" style="left:15.00px;top:529.96px;font-size:13.40px;line-height:13.40px;color:#1169d6;font-weight:bold;transform:scaleX(0.9577);transform-origin:0 0;">dbms_output</span><div class="a" style="left:6px;top:552px;width:988px;height:61px;background:#fff;border:1px solid #7a7f88;"></div><span id="t98" class="tx" style="left:10.60px;top:556.49px;font-size:11.00px;line-height:11.00px;color:#000;">p_emp_id=100</span><div class="a" style="left:976px;top:554px;width:16px;height:58px;background:#f0f0f0;"></div><svg style="left:976px;top:554px" width="16" height="58" fill="none" stroke="#b6b6b6" stroke-width="1.900"><path d="M4.500 11 8 7.500l3.500 3.500"/><path d="M4.500 47 8 50.500l3.500-3.500"/></svg><div class="a" style="left:0px;top:628px;width:1000px;height:22px;background:#444444;"></div><div class="a" style="left:183px;top:628px;width:1px;height:22px;background:#787878;"></div><div class="a" style="left:206px;top:628px;width:1px;height:22px;background:#787878;"></div><div class="a" style="left:227px;top:628px;width:1px;height:22px;background:#787878;"></div><div class="a" style="left:259px;top:628px;width:1px;height:22px;background:#787878;"></div><div class="a" style="left:287px;top:628px;width:1px;height:22px;background:#787878;"></div><div class="a" style="left:318px;top:628px;width:1px;height:22px;background:#787878;"></div><div class="a" style="left:345px;top:628px;width:1px;height:22px;background:#787878;"></div><div class="a" style="left:368px;top:628px;width:1px;height:22px;background:#787878;"></div><div class="a" style="left:431px;top:628px;width:1px;height:22px;background:#787878;"></div><div class="a" style="left:554px;top:628px;width:1px;height:22px;background:#787878;"></div><div class="a" style="left:981px;top:628px;width:1px;height:22px;background:#787878;"></div><span id="t99" class="tx" style="left:4.04px;top:632.49px;font-size:11.00px;line-height:11.00px;color:#fff;transform:scaleX(0.9530);transform-origin:0 0;">10</span><span id="t100" class="tx" style="left:230.52px;top:632.49px;font-size:11.00px;line-height:11.00px;color:#9a9a9a;transform:scaleX(0.8645);transform-origin:0 0;">CAPS</span><span id="t101" class="tx" style="left:261.76px;top:632.49px;font-size:11.00px;line-height:11.00px;color:#9a9a9a;transform:scaleX(0.9361);transform-origin:0 0;">NUM</span><span id="t102" class="tx" style="left:290.42px;top:632.49px;font-size:11.00px;line-height:11.00px;color:#9a9a9a;transform:scaleX(0.8469);transform-origin:0 0;">SCRL</span><span id="t103" class="tx" style="left:322.84px;top:632.49px;font-size:11.00px;line-height:11.00px;color:#9a9a9a;transform:scaleX(0.9614);transform-origin:0 0;">INS</span><span id="t104" class="tx" style="left:353.80px;top:633.49px;font-size:11.00px;line-height:11.00px;color:#fff;transform:scaleX(1.3500);transform-origin:0 0;">*</span><span id="t105" class="tx" style="left:384.52px;top:632.49px;font-size:11.00px;line-height:11.00px;color:#fff;transform:scaleX(0.9767);transform-origin:0 0;">UTF-8</span><span id="t106" class="tx" style="left:462.25px;top:632.49px;font-size:11.00px;line-height:11.00px;color:#fff;transform:scaleX(0.9929);transform-origin:0 0;">8 characters</span><span id="t107" class="tx" style="left:556.81px;top:632.49px;font-size:11.00px;line-height:11.00px;color:#fff;transform:scaleX(0.9936);transform-origin:0 0;">Hit a breakpoint</span><div class="a" style="left:994px;top:644px;width:2px;height:2px;background:#c4c4c4;"></div><div class="a" style="left:990px;top:644px;width:2px;height:2px;background:#c4c4c4;"></div><div class="a" style="left:986px;top:644px;width:2px;height:2px;background:#c4c4c4;"></div><div class="a" style="left:994px;top:640px;width:2px;height:2px;background:#c4c4c4;"></div><div class="a" style="left:990px;top:640px;width:2px;height:2px;background:#c4c4c4;"></div><div class="a" style="left:994px;top:636px;width:2px;height:2px;background:#c4c4c4;"></div><div class="a" style="left:0px;top:51px;width:1px;height:599px;background:#444444;"></div><div class="a" style="left:999px;top:51px;width:1px;height:599px;background:#444444;"></div><div class="a" style="left:0px;top:649px;width:1000px;height:1px;background:#444444;"></div><div class="a" style="left:495px;top:407px;width:2px;height:2px;background:#6a6a6a;"></div><div class="a" style="left:499px;top:407px;width:2px;height:2px;background:#6a6a6a;"></div><div class="a" style="left:503px;top:407px;width:2px;height:2px;background:#6a6a6a;"></div><svg style="left:0;top:0" width="1000" height="650"><g fill="#fff" stroke="#fff" stroke-width="0.8" stroke-linejoin="round" style="filter:blur(0.6px)"><rect x="443.0" y="70.0" width="237.0" height="65.0" rx="8.0"/><polygon points="80.0,76.3 444.0,76.9 444.0,101.0 80.0,77.9"/></g><g fill="#f5bb22"><rect x="446.8" y="73.5" width="229.7" height="58.1" rx="5.0"/><polygon points="164.0,80.4 448.0,82.4 448.0,96.3"/></g></svg><span id="t108" class="tx" style="left:470.54px;top:80.97px;font-size:18.70px;line-height:18.70px;color:#111;transform:scaleX(0.9334);transform-origin:0 0;-webkit-text-stroke:0.35px #111;">Run,</span><span id="t109" class="tx" style="left:515.62px;top:80.97px;font-size:18.70px;line-height:18.70px;color:#111;transform:scaleX(0.9523);transform-origin:0 0;-webkit-text-stroke:0.35px #111;">stop,</span><span id="t110" class="tx" style="left:565.48px;top:80.97px;font-size:18.70px;line-height:18.70px;color:#111;transform:scaleX(1.0953);transform-origin:0 0;-webkit-text-stroke:0.35px #111;">step-into,</span><span id="t111" class="tx" style="left:461.29px;top:104.57px;font-size:18.70px;line-height:18.70px;color:#111;transform:scaleX(1.0780);transform-origin:0 0;-webkit-text-stroke:0.35px #111;">step-over,</span><span id="t112" class="tx" style="left:554.39px;top:104.57px;font-size:18.70px;line-height:18.70px;color:#111;transform:scaleX(1.0763);transform-origin:0 0;-webkit-text-stroke:0.35px #111;">step-out,</span><span id="t113" class="tx" style="left:639.09px;top:104.57px;font-size:18.70px;line-height:18.70px;color:#111;transform:scaleX(1.3750);transform-origin:0 0;-webkit-text-stroke:0.35px #111;">...</span><svg style="left:0;top:0" width="1000" height="650"><g fill="#fff" stroke="#fff" stroke-width="0.8" stroke-linejoin="round" style="filter:blur(0.6px)"><rect x="315.5" y="252.6" width="115.0" height="38.8" rx="7.0"/><polygon points="54.0,244.2 316.5,255.5 316.5,271.2 54.0,247.6"/></g><g fill="#ff0000"><rect x="318.8" y="255.8" width="108.6" height="32.1" rx="4.0"/><polygon points="154.0,252.0 320.0,260.5 320.0,267.5"/></g></svg><span id="t114" class="tx" style="left:325.10px;top:262.46px;font-size:19.30px;line-height:19.30px;color:#fff;transform:scaleX(0.9942);transform-origin:0 0;-webkit-text-stroke:0.35px #fff;">Breakpoint</span><svg style="left:0;top:0" width="1000" height="650"><g fill="#fff" stroke="#fff" stroke-width="0.8" stroke-linejoin="round" style="filter:blur(0.6px)"><rect x="339.8" y="361.6" width="162.0" height="64.4" rx="8.0"/><polygon points="203.0,393.6 340.5,368.4 340.5,393.0 203.0,395.0"/></g><g fill="#f5bb22"><rect x="343.6" y="365.6" width="154.2" height="56.6" rx="5.0"/><polygon points="254.0,388.7 345.0,373.6 345.0,388.8"/></g></svg><span id="t115" class="tx" style="left:367.09px;top:372.17px;font-size:18.70px;line-height:18.70px;color:#111;transform:scaleX(0.8794);transform-origin:0 0;-webkit-text-stroke:0.35px #111;">Switch</span><span id="t116" class="tx" style="left:428.79px;top:372.17px;font-size:18.70px;line-height:18.70px;color:#111;transform:scaleX(1.0409);transform-origin:0 0;-webkit-text-stroke:0.35px #111;">open</span><span id="t117" class="tx" style="left:359.08px;top:395.77px;font-size:18.70px;line-height:18.70px;color:#111;transform:scaleX(0.8978);transform-origin:0 0;-webkit-text-stroke:0.35px #111;">code</span><span id="t118" class="tx" style="left:405.30px;top:395.77px;font-size:18.70px;line-height:18.70px;color:#111;transform:scaleX(1.0305);transform-origin:0 0;-webkit-text-stroke:0.35px #111;">windows</span><svg style="left:0;top:0" width="1000" height="650"><g fill="#fff" stroke="#fff" stroke-width="0.8" stroke-linejoin="round" style="filter:blur(0.6px)"><rect x="136.5" y="427.8" width="99.0" height="66.2" rx="8.0"/><polygon points="85.0,460.3 137.0,454.8 137.0,474.0 85.0,462.5"/></g><g fill="#f5bb22"><rect x="140.0" y="431.3" width="92.0" height="59.2" rx="5.0"/><polygon points="104.5,462.0 141.0,459.5 141.0,469.5"/></g></svg><span id="t119" class="tx" style="left:158.50px;top:438.47px;font-size:18.70px;line-height:18.70px;color:#111;transform:scaleX(1.0048);transform-origin:0 0;-webkit-text-stroke:0.35px #111;">Watch</span><span id="t120" class="tx" style="left:147.50px;top:461.67px;font-size:18.70px;line-height:18.70px;color:#111;transform:scaleX(1.0033);transform-origin:0 0;-webkit-text-stroke:0.35px #111;">variables</span><svg style="left:0;top:0" width="1000" height="650"><g fill="#fff" stroke="#fff" stroke-width="0.8" stroke-linejoin="round" style="filter:blur(0.6px)"></g><g fill="#f5bb22"><rect x="456.0" y="463.0" width="130.0" height="32.6" rx="4.0"/><polygon points="413.6,468.0 457.0,480.0 457.0,492.0"/></g></svg><span id="t121" class="tx" style="left:469.51px;top:469.77px;font-size:18.70px;line-height:18.70px;color:#111;transform:scaleX(1.0196);transform-origin:0 0;-webkit-text-stroke:0.35px #111;">Breakpoints</span><svg style="left:0;top:0" width="1000" height="650"><g fill="#fff" stroke="#fff" stroke-width="0.8" stroke-linejoin="round" style="filter:blur(0.6px)"><rect x="850.5" y="361.4" width="88.3" height="65.1" rx="8.0"/><polygon points="808.9,448.3 851.5,397.4 851.5,419.8"/></g><g fill="#f5bb22"><rect x="854.0" y="364.9" width="81.1" height="58.1" rx="5.0"/><polygon points="824.4,433.0 855.0,399.0 855.0,413.7"/></g></svg><span id="t122" class="tx" style="left:876.78px;top:371.67px;font-size:18.70px;line-height:18.70px;color:#111;transform:scaleX(1.0464);transform-origin:0 0;-webkit-text-stroke:0.35px #111;">Call</span><span id="t123" class="tx" style="left:871.31px;top:395.67px;font-size:18.70px;line-height:18.70px;color:#111;transform:scaleX(1.0081);transform-origin:0 0;-webkit-text-stroke:0.35px #111;">stack</span><svg style="left:0;top:0" width="1000" height="650"><rect x="138.700" y="562.500" width="206.400" height="35.300" rx="9" ry="1.500" fill="#f5bb22"/></svg><span id="t124" class="tx" style="left:182.57px;top:571.17px;font-size:18.70px;line-height:18.70px;color:#111;transform:scaleX(0.9136);transform-origin:0 0;-webkit-text-stroke:0.35px #111;">Server</span><span id="t125" class="tx" style="left:241.77px;top:571.17px;font-size:18.70px;line-height:18.70px;color:#111;transform:scaleX(1.0861);transform-origin:0 0;-webkit-text-stroke:0.35px #111;">output</span>
</div>
</body></html>
